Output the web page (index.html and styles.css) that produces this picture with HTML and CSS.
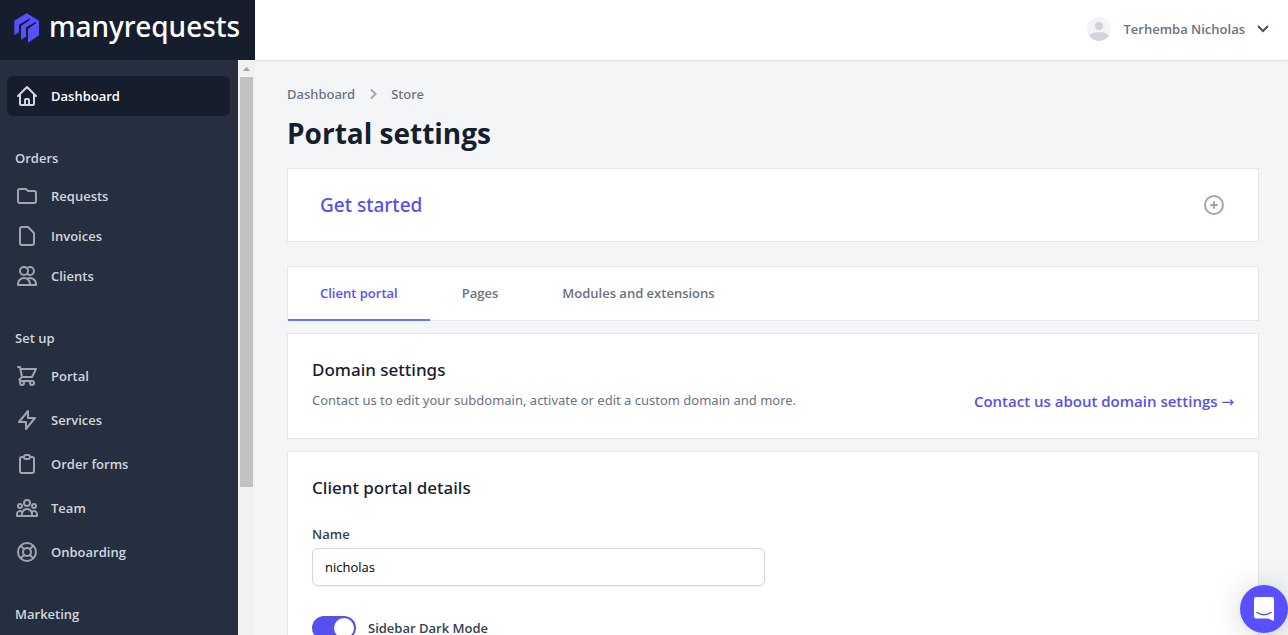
FILE: index.html
```html
<!DOCTYPE html>
<html lang="en">
<head>
<meta charset="utf-8">
<title>Portal settings</title>
<link rel="stylesheet" href="styles.css">
</head>
<body>
<div class="app">
  <aside class="sidebar">
    <a class="brand" href="#">
      <svg class="brand-mark" viewBox="44 40 78 90" aria-hidden="true">
        <path d="M45 63L82 41L119 63V107L86 129V88L110 71V66L80 83V111L65 120V79L91 62V56L59 75V98L45 106Z"/>
      </svg>
      <span>manyrequests</span>
    </a>
    <div class="sidebar-body">
      <nav class="nav">
        <a class="nav-item active" href="#"><svg class="icon" viewBox="0 0 24 24"><path d="M3 12l2-2m0 0l7-7 7 7M5 10v10a1 1 0 001 1h3m10-11l2 2m-2-2v10a1 1 0 01-1 1h-3m-6 0a1 1 0 001-1v-4a1 1 0 011-1h2a1 1 0 011 1v4a1 1 0 001 1m-6 0h6"/></svg>Dashboard</a>
        <section class="nav-group">
          <h2>Orders</h2>
          <a class="nav-item" href="#"><svg class="icon" viewBox="0 0 24 24"><path d="M3 7v10a2 2 0 002 2h14a2 2 0 002-2V9a2 2 0 00-2-2h-6l-2-2H5a2 2 0 00-2 2z"/></svg>Requests</a>
          <a class="nav-item" href="#"><svg class="icon" viewBox="0 0 24 24"><path d="M7 21h10a2 2 0 002-2V9.414a1 1 0 00-.293-.707l-5.414-5.414A1 1 0 0012.586 3H7a2 2 0 00-2 2v14a2 2 0 002 2z"/></svg>Invoices</a>
          <a class="nav-item" href="#"><svg class="icon" viewBox="0 0 24 24"><path d="M12 4.354a4 4 0 110 5.292M15 21H3v-1a6 6 0 0112 0v1zm0 0h6v-1a6 6 0 00-9-5.197M13 7a4 4 0 11-8 0 4 4 0 018 0z"/></svg>Clients</a>
        </section>
        <section class="nav-group spaced">
          <h2>Set up</h2>
          <a class="nav-item" href="#"><svg class="icon" viewBox="0 0 24 24"><path d="M3 3h2l.4 2M7 13h10l4-8H5.4M7 13L5.4 5M7 13l-2.293 2.293c-.63.63-.184 1.707.707 1.707H17m0 0a2 2 0 100 4 2 2 0 000-4zm-8 2a2 2 0 11-4 0 2 2 0 014 0z"/></svg>Portal</a>
          <a class="nav-item" href="#"><svg class="icon" viewBox="0 0 24 24"><path d="M13 10V3L4 14h7v7l9-11h-7z"/></svg>Services</a>
          <a class="nav-item" href="#"><svg class="icon" viewBox="0 0 24 24"><path d="M9 5H7a2 2 0 00-2 2v12a2 2 0 002 2h10a2 2 0 002-2V7a2 2 0 00-2-2h-2M9 5a2 2 0 002 2h2a2 2 0 002-2M9 5a2 2 0 012-2h2a2 2 0 012 2"/></svg>Order forms</a>
          <a class="nav-item" href="#"><svg class="icon" viewBox="0 0 24 24"><path d="M17 20h5v-2a3 3 0 00-5.356-1.857M17 20H7m10 0v-2c0-.656-.126-1.283-.356-1.857M7 20H2v-2a3 3 0 015.356-1.857M7 20v-2c0-.656.126-1.283.356-1.857m0 0a5.002 5.002 0 019.288 0M15 7a3 3 0 11-6 0 3 3 0 016 0zm6 3a2 2 0 11-4 0 2 2 0 014 0zM7 10a2 2 0 11-4 0 2 2 0 014 0z"/></svg>Team</a>
          <a class="nav-item" href="#"><svg class="icon" viewBox="0 0 24 24"><path d="M18.364 5.636l-3.536 3.536m0 5.656l3.536 3.536M9.172 9.172L5.636 5.636m3.536 9.192l-3.536 3.536M21 12a9 9 0 11-18 0 9 9 0 0118 0zm-5 0a4 4 0 11-8 0 4 4 0 018 0z"/></svg>Onboarding</a>
        </section>
        <section class="nav-group">
          <h2>Marketing</h2>
        </section>
      </nav>
      <div class="scrollbar" aria-hidden="true">
        <svg class="scroll-arrow" viewBox="0 0 17 17"><path d="M5 11L8.500 7L12 11Z"/></svg>
        <div class="scroll-thumb"></div>
      </div>
    </div>
  </aside>

  <div class="page">
    <header class="topbar">
      <button class="account" type="button">
        <svg class="avatar" viewBox="0 0 24 24" aria-hidden="true"><circle cx="12" cy="12" r="12" fill="#f3f4f6"/><circle cx="12" cy="9" r="4" fill="#d1d5db"/><path d="M2 18.600C4 16 8 15 12 15S20 16 22 18.600A12 12 0 0 1 2 18.600Z" fill="#d1d5db"/></svg>
        <span>Terhemba Nicholas</span>
        <svg class="caret" viewBox="0 0 12 12" aria-hidden="true"><path d="M1 3L6 8L11 3"/></svg>
      </button>
    </header>

    <main class="content">
      <nav class="crumbs" aria-label="Breadcrumb">
        <a href="#">Dashboard</a>
        <svg viewBox="0 0 20 20" aria-hidden="true"><path d="M8 5.500L12.500 10L8 14.500"/></svg>
        <a href="#">Store</a>
      </nav>
      <h1>Portal settings</h1>

      <section class="card started">
        <h2>Get started</h2>
        <button class="expand" type="button" aria-label="Expand"><svg class="icon" viewBox="0 0 24 24"><path d="M12 9v3m0 0v3m0-3h3m-3 0H9m12 0a9 9 0 11-18 0 9 9 0 0118 0z"/></svg></button>
      </section>

      <nav class="card tabs" aria-label="Settings">
        <a class="tab current" href="#">Client portal</a>
        <a class="tab" href="#">Pages</a>
        <a class="tab" href="#">Modules and extensions</a>
      </nav>

      <section class="card domain">
        <div>
          <h3>Domain settings</h3>
          <p>Contact us to edit your subdomain, activate or edit a custom domain and more.</p>
        </div>
        <a class="contact" href="#">Contact us about domain settings <span class="arrow">→</span></a>
      </section>

      <section class="card details">
        <h3>Client portal details</h3>
        <div class="fields">
          <div class="field">
            <label for="name">Name</label>
            <input id="name" type="text" value="nicholas">
          </div>
        </div>
        <label class="switch-row"><input class="switch" type="checkbox" checked>Sidebar Dark Mode</label>
      </section>
    </main>
  </div>
</div>
<button class="chat" type="button" aria-label="Open chat">
  <svg viewBox="0 0 24 26" aria-hidden="true"><path class="bubble" d="M4 1H20A2 2 0 0 1 22 3V25L16 22.500H4A2 2 0 0 1 2 20.500V3A2 2 0 0 1 4 1Z"/><path class="smile" d="M5 16.500C9 19.500 15 19.500 19 16.500"/></svg>
</button>
</body>
</html>
```
FILE: styles.css
```css
* { box-sizing: border-box; }

body {
  margin: 0;
  font-family: "Open Sans", "Noto Sans", sans-serif;
  font-size: 13px;
  line-height: 20px;
  color: #161e2e;
  background: #f4f5f7;
}

h1, h2, h3, p { margin: 0; }
a { color: inherit; text-decoration: none; }
button { border: 0; padding: 0; background: none; font: inherit; color: inherit; cursor: pointer; }

.app { display: flex; height: 100vh; overflow: hidden; }

.icon {
  width: 24px;
  height: 24px;
  fill: none;
  stroke: currentColor;
  stroke-width: 2;
  stroke-linecap: round;
  stroke-linejoin: round;
  flex: none;
}

/* Sidebar */
.sidebar { display: flex; flex-direction: column; flex: none; width: 255px; }
.brand {
  display: flex;
  align-items: flex-start;
  gap: 9px;
  height: 60px;
  flex: none;
  padding: 13px 14px 0;
  background: #161e2e;
  color: #fff;
  font-family: "Noto Sans", sans-serif;
  font-size: 28px;
  font-weight: 500;
  line-height: 26px;
}
.brand-mark { width: 26px; height: 30px; flex: none; fill: #5850ff; }
.sidebar-body { display: flex; flex: 1; min-height: 0; }
.nav {
  flex: 1;
  overflow: hidden;
  padding: 16px 8px 16px 7px;
  background: #252f3f;
  color: #d2d6dc;
  font-weight: 600;
}
.nav-item {
  display: flex;
  align-items: center;
  gap: 12px;
  height: 40px;
  padding: 0 8px;
  border-radius: 6px;
}
.nav-item .icon { color: #9fa6b2; }
.nav-item.active { background: #161e2e; color: #fff; }
.nav-item.active .icon { color: #d2d6dc; }
.nav-group { margin-top: 32px; }
.nav-group h2 { margin-bottom: 8px; padding: 0 8px; font-size: 13px; font-weight: 600; }
.spaced .nav-item + .nav-item { margin-top: 4px; }

.scrollbar { width: 17px; flex: none; background: #f1f1f1; }
.scroll-arrow { display: block; width: 17px; height: 17px; fill: #a3a3a3; }
.scroll-thumb { height: 410px; margin: 0 2px; background: #c1c1c1; }

/* Page */
.page { display: flex; flex-direction: column; flex: 1; min-width: 0; }
.topbar {
  display: flex;
  align-items: center;
  justify-content: flex-end;
  flex: none;
  height: 60px;
  padding: 0 19px 3px;
  background: #fff;
  box-shadow: 0 1px 2px rgba(0, 0, 0, .1);
}
.account { display: flex; align-items: center; gap: 12px; color: #6b7280; font-weight: 600; }
.avatar { width: 24px; height: 24px; }
.caret { width: 12px; height: 12px; fill: none; stroke: #4b5563; stroke-width: 2; }

.content { flex: 1; min-height: 0; overflow: hidden; padding: 24px 29px 0 32px; }
.crumbs { display: flex; align-items: center; gap: 8px; color: #6b7280; font-weight: 500; font-family: "Noto Sans", sans-serif; }
.crumbs svg { width: 20px; height: 20px; fill: none; stroke: #9fa6b2; stroke-width: 2; }
h1 { margin: 9px 0 15px; font-size: 28px; font-weight: 700; line-height: 40px; }

.card { background: #fff; border: 1px solid #e5e7eb; }
.started { display: flex; align-items: center; justify-content: space-between; padding: 24px 32px; margin-bottom: 24px; }
.started h2 { font-family: "Noto Sans", sans-serif; font-size: 19px; font-weight: 500; line-height: 24px; color: #5850ec; }
.expand { display: flex; color: #9fa6b2; }

.tabs { display: flex; height: 55px; margin-bottom: 12px; color: #6b7280; font-weight: 600; }
.tab { padding: 16px 32px; margin-bottom: -1px; border-bottom: 2px solid transparent; }
.tab.current { color: #5850ec; border-color: #6875f5; }

.domain { display: flex; align-items: flex-end; justify-content: space-between; padding: 24px; margin-bottom: 12px; }
h3 { font-family: "Noto Sans", sans-serif; font-size: 17px; font-weight: 500; line-height: 24px; }
.domain p { margin-top: 8px; padding-bottom: 4px; font-family: "Noto Sans", sans-serif; line-height: 20px; color: #6b7280; }
.contact { font-family: "Open Sans", sans-serif; font-size: 15px; font-weight: 600; line-height: 24px; color: #5850ec; }
.arrow { font-family: "DejaVu Sans", sans-serif; font-weight: 400; }

.details { padding: 24px; }
.fields { display: grid; grid-template-columns: 1fr 1fr; gap: 16px; margin-top: 24px; }
.field label { display: block; margin-bottom: 4px; color: #374151; font-weight: 600; }
.field input {
  display: block;
  width: 100%;
  height: 38px;
  padding: 8px 12px;
  border: 1px solid #d2d6dc;
  border-radius: 6px;
  box-shadow: 0 1px 2px rgba(0, 0, 0, .05);
  background: #fff;
  color: #000;
  font: inherit;
}
.switch-row { display: flex; align-items: center; gap: 12px; margin-top: 30px; color: #374151; font-weight: 600; }
.switch {
  appearance: none;
  display: flex;
  justify-content: flex-end;
  width: 44px;
  height: 24px;
  margin: 0;
  padding: 2px;
  border-radius: 12px;
  background: #5850ec;
}
.switch::before { content: ""; width: 20px; height: 20px; border-radius: 50%; background: #fff; }

/* Chat launcher */
.chat {
  position: fixed;
  right: 0;
  bottom: 2px;
  display: flex;
  align-items: center;
  justify-content: center;
  width: 48px;
  height: 48px;
  border-radius: 50%;
  background: #5850ff;
  box-shadow: 0 1px 6px rgba(0, 0, 0, .06), 0 2px 32px rgba(0, 0, 0, .16);
}
.chat svg { width: 24px; height: 26px; }
.bubble { fill: #fff; }
.smile { fill: none; stroke: #5850ff; stroke-width: 1.500; stroke-linecap: round; }
```
